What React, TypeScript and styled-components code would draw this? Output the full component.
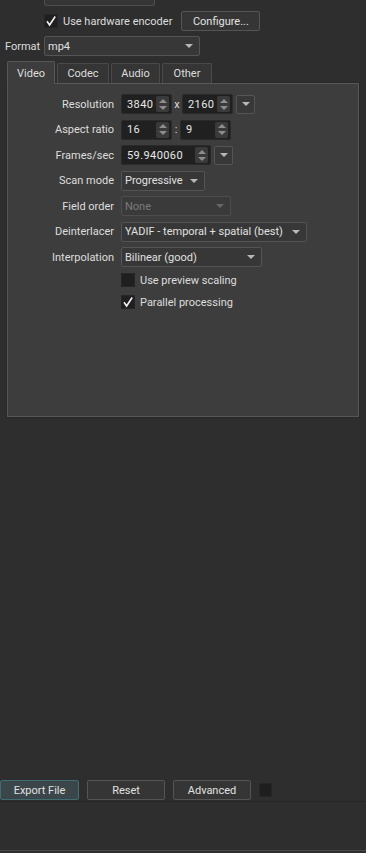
import React from 'react';
import styled, { createGlobalStyle, css } from 'styled-components';

const GlobalStyle = createGlobalStyle`
  html, body {
    margin: 0;
    padding: 0;
    background: #2e2e2e;
  }
  * {
    box-sizing: border-box;
  }
`;

const Page = styled.div`
  width: 366px;
  height: 853px;
  overflow: hidden;
  background: #2e2e2e;
  display: flex;
  flex-direction: column;
  font-family: Roboto, 'Noto Sans', sans-serif;
  font-size: 11px;
  color: #dedede;
`;

const CutButton = styled.div`
  width: 111px;
  height: 6px;
  margin-left: 44px;
  border: 1px solid #4e4e4e;
  border-top: none;
  border-radius: 0 0 3px 3px;
  background: #353535;
`;

const Row = styled.div<{ $indent?: number; $top?: number }>`
  display: flex;
  align-items: center;
  padding-left: ${(p) => p.$indent ?? 0}px;
  margin-top: ${(p) => p.$top ?? 0}px;
`;

const CheckBox = styled.span`
  width: 14px;
  height: 14px;
  background: #1f1f1f;
  border: 1px solid #262626;
  display: inline-flex;
  align-items: center;
  justify-content: center;
  flex-shrink: 0;
`;

const CheckLabel = styled.span`
  margin-left: 5px;
  white-space: nowrap;
`;

const PushButton = styled.button<{ $primary?: boolean; $width: number }>`
  width: ${(p) => p.$width}px;
  height: 20px;
  padding: 0;
  font: inherit;
  color: #e2e2e2;
  background: #353535;
  border: 1px solid #555;
  border-radius: 2px;
  ${(p) =>
    p.$primary &&
    css`
      background: #3a4649;
      border-color: #3f6d72;
    `}
`;

const Combo = styled.div<{ $width: number; $disabled?: boolean }>`
  width: ${(p) => p.$width}px;
  height: 20px;
  display: flex;
  align-items: center;
  justify-content: space-between;
  padding: 0 6px 0 3px;
  background: #373737;
  border: 1px solid #545454;
  border-radius: 2px;
  color: ${(p) => (p.$disabled ? '#7a7a7a' : '#e0e0e0')};
  white-space: nowrap;
  flex-shrink: 0;
  ${(p) =>
    p.$disabled &&
    css`
      background: #3a3a3a;
      border-color: #4d4d4d;
    `}
`;

const Arrow = styled.span<{ $dim?: boolean }>`
  width: 0;
  height: 0;
  flex-shrink: 0;
  border-left: 4px solid transparent;
  border-right: 4px solid transparent;
  border-top: 4px solid ${(p) => (p.$dim ? '#666' : '#b8b8b8')};
`;

const FormatLabel = styled.span`
  width: 44px;
  flex-shrink: 0;
  padding-left: 5px;
  white-space: nowrap;
`;

const TabStrip = styled.div`
  display: flex;
  align-items: flex-end;
  gap: 2px;
  margin: 5px 0 0 7px;
  height: 22px;
`;

const Tab = styled.div<{ $active?: boolean; $width: number }>`
  width: ${(p) => p.$width}px;
  height: ${(p) => (p.$active ? 23 : 20)}px;
  display: flex;
  align-items: center;
  justify-content: center;
  border: 1px solid ${(p) => (p.$active ? '#585858' : '#4a4a4a')};
  border-bottom: none;
  border-radius: 2px 2px 0 0;
  background: ${(p) => (p.$active ? '#3d3d3d' : '#353535')};
  margin-bottom: ${(p) => (p.$active ? -1 : 0)}px;
  position: relative;
  z-index: ${(p) => (p.$active ? 1 : 0)};
`;

const Panel = styled.div`
  margin-left: 7px;
  width: 352px;
  height: 334px;
  background: #3d3d3d;
  border: 1px solid #585858;
  box-shadow: 0 0 0 1px #272727;
  padding-top: 10px;
`;

const Form = styled.div`
  display: grid;
  grid-template-columns: 106px auto;
  column-gap: 7px;
  row-gap: 5.5px;
  align-items: center;
  grid-auto-rows: 20px;
`;

const FieldLabel = styled.span`
  text-align: right;
  white-space: nowrap;
`;

const Controls = styled.div`
  display: flex;
  align-items: center;
`;

const SpinBox = styled.div<{ $width: number }>`
  width: ${(p) => p.$width}px;
  height: 20px;
  display: flex;
  align-items: center;
  justify-content: space-between;
  padding: 0 2px 0 5px;
  background: #202020;
  border: 1px solid #2a2a2a;
  border-radius: 2px;
  color: #e8e8e8;
  letter-spacing: 0.4px;
`;

const SpinButtons = styled.span`
  width: 13px;
  height: 16px;
  display: flex;
  flex-direction: column;
  align-items: center;
  justify-content: center;
  gap: 3px;
  background: #3a3a3a;
  border-radius: 2px;
`;

const Tri = styled.span<{ $up?: boolean }>`
  width: 0;
  height: 0;
  border-left: 4px solid transparent;
  border-right: 4px solid transparent;
  ${(p) =>
    p.$up ? 'border-bottom: 4px solid #8d8d8d;' : 'border-top: 4px solid #8d8d8d;'}
`;

const Sep = styled.span<{ $w: number }>`
  width: ${(p) => p.$w}px;
  text-align: center;
`;

const DropButton = styled.div`
  width: 19px;
  height: 19px;
  margin-left: 3px;
  display: flex;
  align-items: center;
  justify-content: center;
  background: #383838;
  border: 1px solid #555;
  border-radius: 2px;
`;

const CheckList = styled.div`
  display: flex;
  flex-direction: column;
  gap: 8px;
  margin: 6px 0 0 113px;
`;

const BottomBar = styled.div`
  margin-top: auto;
  display: flex;
  align-items: center;
  gap: 8px;
  height: 20px;
`;

const SmallSquare = styled.span`
  width: 13px;
  height: 14px;
  background: #1e1e1e;
  border: 1px solid #262626;
`;

const Divider = styled.div`
  margin-top: 1px;
  height: 1px;
  background: #262626;
`;

const Footer = styled.div`
  height: 49px;
  border-bottom: 1px solid #4a4a4a;
  margin-bottom: 2px;
`;

function Check() {
  return (
    <svg width="12" height="12" viewBox="0 0 12 12">
      <path d="M2 6.2 L4.6 10 L10.2 1.5" fill="none" stroke="#f2f2f2" strokeWidth="1.6" />
    </svg>
  );
}

function Spin({ value, width }: { value: string; width: number }) {
  return (
    <SpinBox $width={width}>
      <span>{value}</span>
      <SpinButtons>
        <Tri $up />
        <Tri />
      </SpinButtons>
    </SpinBox>
  );
}

export default function App() {
  return (
    <Page>
      <GlobalStyle />
      <CutButton />
      <Row $indent={44} $top={5}>
        <CheckBox>
          <Check />
        </CheckBox>
        <CheckLabel>Use hardware encoder</CheckLabel>
        <PushButton $width={79} style={{ marginLeft: 9 }}>
          Configure...
        </PushButton>
      </Row>
      <Row $top={5}>
        <FormatLabel>Format</FormatLabel>
        <Combo $width={156}>
          <span>mp4</span>
          <Arrow />
        </Combo>
      </Row>
      <TabStrip>
        <Tab $active $width={48}>Video</Tab>
        <Tab $width={52}>Codec</Tab>
        <Tab $width={49}>Audio</Tab>
        <Tab $width={50}>Other</Tab>
      </TabStrip>
      <Panel>
        <Form>
          <FieldLabel>Resolution</FieldLabel>
          <Controls>
            <Spin value="3840" width={51} />
            <Sep $w={10}>x</Sep>
            <Spin value="2160" width={51} />
            <DropButton>
              <Arrow />
            </DropButton>
          </Controls>
          <FieldLabel>Aspect ratio</FieldLabel>
          <Controls>
            <Spin value="16" width={51} />
            <Sep $w={8}>:</Sep>
            <Spin value="9" width={51} />
          </Controls>
          <FieldLabel>Frames/sec</FieldLabel>
          <Controls>
            <Spin value="59.940060" width={90} />
            <DropButton>
              <Arrow />
            </DropButton>
          </Controls>
          <FieldLabel>Scan mode</FieldLabel>
          <Controls>
            <Combo $width={84}>
              <span>Progressive</span>
              <Arrow />
            </Combo>
          </Controls>
          <FieldLabel>Field order</FieldLabel>
          <Controls>
            <Combo $width={110} $disabled>
              <span>None</span>
              <Arrow $dim />
            </Combo>
          </Controls>
          <FieldLabel>Deinterlacer</FieldLabel>
          <Controls>
            <Combo $width={186}>
              <span>YADIF - temporal + spatial (best)</span>
              <Arrow />
            </Combo>
          </Controls>
          <FieldLabel>Interpolation</FieldLabel>
          <Controls>
            <Combo $width={141}>
              <span>Bilinear (good)</span>
              <Arrow />
            </Combo>
          </Controls>
        </Form>
        <CheckList>
          <Row>
            <CheckBox />
            <CheckLabel>Use preview scaling</CheckLabel>
          </Row>
          <Row>
            <CheckBox>
              <Check />
            </CheckBox>
            <CheckLabel>Parallel processing</CheckLabel>
          </Row>
        </CheckList>
      </Panel>
      <BottomBar>
        <PushButton $primary $width={79}>Export File</PushButton>
        <PushButton $width={78}>Reset</PushButton>
        <PushButton $width={78}>Advanced</PushButton>
        <SmallSquare />
      </BottomBar>
      <Divider />
      <Footer />
    </Page>
  );
}
